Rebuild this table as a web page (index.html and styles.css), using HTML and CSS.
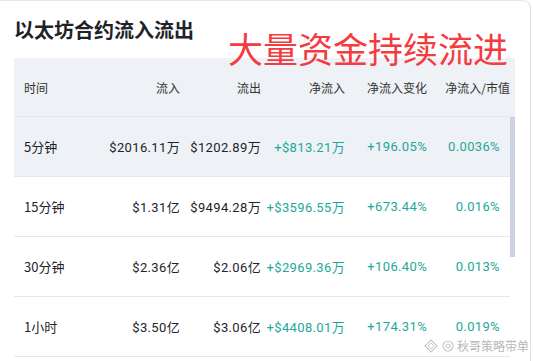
FILE: index.html
```html
<!DOCTYPE html>
<html lang="zh">
<head>
<meta charset="utf-8">
<link rel="stylesheet" href="styles.css">
</head>
<body>
<div class="card">
  <h1 class="title">以太坊合约流入流出</h1>
  <div class="table">
    <div class="row head">
      <div class="cell left">时间</div>
      <div class="cell">流入</div>
      <div class="cell">流出</div>
      <div class="cell">净流入</div>
      <div class="cell">净流入变化</div>
      <div class="cell last">净流入/市值</div>
    </div>
    <div class="body">
      <div class="rows">
        <div class="row hover">
          <div class="cell left">5分钟</div>
          <div class="cell num">$2016.11万</div>
          <div class="cell num">$1202.89万</div>
          <div class="cell num up">+$813.21万</div>
          <div class="cell num up">+196.05%</div>
          <div class="cell num up last">0.0036%</div>
        </div>
        <div class="row">
          <div class="cell left">15分钟</div>
          <div class="cell num">$1.31亿</div>
          <div class="cell num">$9494.28万</div>
          <div class="cell num up">+$3596.55万</div>
          <div class="cell num up">+673.44%</div>
          <div class="cell num up last">0.016%</div>
        </div>
        <div class="row">
          <div class="cell left">30分钟</div>
          <div class="cell num">$2.36亿</div>
          <div class="cell num">$2.06亿</div>
          <div class="cell num up">+$2969.36万</div>
          <div class="cell num up">+106.40%</div>
          <div class="cell num up last">0.013%</div>
        </div>
        <div class="row">
          <div class="cell left">1小时</div>
          <div class="cell num">$3.50亿</div>
          <div class="cell num">$3.06亿</div>
          <div class="cell num up">+$4408.01万</div>
          <div class="cell num up">+174.31%</div>
          <div class="cell num up last">0.019%</div>
        </div>
      </div>
      <div class="scroll"><div class="thumb"></div></div>
    </div>
  </div>
  <div class="annot">大量资金持续流进</div>
  <div class="watermark">
    <svg width="16" height="14" viewBox="0 0 16 14"><path d="M8 1 L14 7 L8 13 L2 7 Z" fill="none" stroke="#c8c8c8" stroke-width="1.2"/><path d="M8 4 L11 7 L8 10 L5 7 Z" fill="none" stroke="#c8c8c8" stroke-width="1"/></svg>
    <svg width="12" height="12" viewBox="0 0 12 12"><circle cx="6" cy="6" r="5" fill="none" stroke="#c8c8c8" stroke-width="1.2"/><circle cx="6" cy="6" r="2" fill="none" stroke="#c8c8c8" stroke-width="1.2"/></svg>
    <span>秋哥策略带单</span>
  </div>
</div>
</body>
</html>
```
FILE: styles.css
```css
* { box-sizing: border-box; }
html, body { margin: 0; padding: 0; background: #fff; }
body { font-family: "Noto Sans CJK SC", "Noto Sans", sans-serif; color: #1e2329; }
.card {
  position: relative;
  width: 531px;
  height: 361px;
  border-top: 1px solid #e8e8e8;
  border-right: 1px solid #e0e0e0;
  border-top-right-radius: 8px;
  padding-left: 14px;
  overflow: hidden;
}
.title {
  margin: 0;
  height: 57px;
  padding-top: 15px;
  font-size: 20px;
  line-height: 28px;
  font-weight: 700;
  color: #1e2329;
}
.table { width: 501px; }
.row {
  display: grid;
  grid-template-columns: 86px 80px 81px 84px 82px 83px;
  height: 60px;
  border-bottom: 1px solid #e6e8eb;
  align-items: center;
}
.head {
  height: 59px;
  background: #eef1f5;
  font-size: 12px;
  color: #333;
}
.body { display: flex; }
.rows { width: 496px; }
.hover { background: #eef1f5; }
.cell {
  padding: 0;
  text-align: right;
  white-space: nowrap;
  min-width: 0;
}
.cell.left { text-align: left; font-size: 13px; padding-left: 10px; }
.head .cell.left { font-size: 12px; }
.num.last { padding-right: 10px; }
.num {
  font-family: "Roboto", "Noto Sans CJK SC", sans-serif;
  font-size: 13px;
  letter-spacing: 0.35px;
  color: #1e2329;
}
.num.up { color: #1ea89a; }
.scroll { width: 5px; }
.thumb { height: 140px; background: #ccd2e0; }
.annot {
  position: absolute;
  left: 228px;
  top: 25px;
  font-size: 35px;
  line-height: 44px;
  color: #f43b3f;
  white-space: nowrap;
}
.watermark {
  position: absolute;
  left: 423px;
  top: 337px;
  display: flex;
  align-items: center;
  gap: 3px;
  font-size: 12px;
  color: #b8b8b8;
  line-height: 16px;
}
```
